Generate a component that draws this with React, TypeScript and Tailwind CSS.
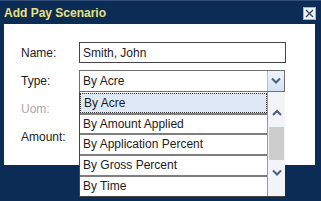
import React from "react";

const items = ["By Acre", "By Amount Applied", "By Application Percent", "By Gross Percent", "By Time"];
const rowH = ["", "h-[20px]", "h-[21px]", "h-[21px]", "h-[21px]"];

function Chevron({ up = false }: { up?: boolean }) {
  return (
    <svg width="10" height="7" viewBox="0 0 10 7" className="block">
      <path
        d={up ? "M1 6 L5 2 L9 6" : "M1 1.5 L5 5.5 L9 1.5"}
        fill="none"
        stroke="#4f5e78"
        strokeWidth="2"
      />
    </svg>
  );
}

export default function App() {
  return (
    <div
      className="w-[321px] h-[201px] bg-[#0b2c55] flex flex-col border-t border-[#34507a] overflow-hidden"
      style={{ fontFamily: '"Liberation Sans", Arial, sans-serif' }}
    >
      <div className="h-[23px] flex items-center justify-between pl-[4px] pr-[5px]">
        <span className="text-[12px] font-bold text-[#e9e27c] leading-none">Add Pay Scenario</span>
        <div className="w-[13px] h-[13px] bg-[#eef3f8] border border-[#9fb2c8] flex items-center justify-center mt-[2px]">
          <svg width="9" height="9" viewBox="0 0 9 9">
            <path d="M1 1 L8 8 M8 1 L1 8" stroke="#3b4a63" strokeWidth="1.4" />
          </svg>
        </div>
      </div>
      <div className="mx-[4px] mr-[6px] h-[141px] bg-white pt-[18px] pl-[17px] flex flex-col gap-[7px] text-[12px] text-[#1c1c1c]">
        <div className="flex items-center h-[21px]">
          <span className="w-[58px]">Name:</span>
          <div className="w-[207px] h-[21px] border border-[#444] flex items-center pl-[3px]">Smith, John</div>
        </div>
        <div className="flex items-center h-[21px]">
          <span className="w-[58px]">Type:</span>
          <div className="relative w-[206px] h-[22px]">
            <div className="w-full h-full border border-[#6f6f6f] flex items-center">
              <span className="flex-1 pl-[3px]">By Acre</span>
              <div className="w-[17px] h-full bg-gradient-to-b from-[#eef4fb] to-[#d3e2f4] border-l border-[#a9bfda] flex items-center justify-center">
                <Chevron />
              </div>
            </div>
            <div className="absolute left-0 top-[22px] w-[206px] h-[105px] bg-white border-l border-b border-[#444] flex z-10">
              <div className="flex-1 flex flex-col border-r border-[#9a9a9a] pt-[1px]">
                {items.map((it, i) => (
                  <div
                    key={it}
                    className={
                      i === 0
                        ? "h-[20px] bg-[#dfe8f6] border border-dotted border-[#333] flex items-center pl-[3px]"
                        : `${rowH[i]} border-t-2 border-[#7e7e7e] flex items-center pl-[3px]`
                    }
                  >
                    {it}
                  </div>
                ))}
              </div>
              <div className="w-[17px] bg-[#f2f4f7] flex flex-col items-center">
                <div className="h-[14px]" />
                <div className="h-[14px] flex items-center justify-center">
                  <Chevron up />
                </div>
                <div className="h-[7px]" />
                <div className="w-[15px] h-[33px] bg-[#cdcdcd]" />
                <div className="h-[5px]" />
                <div className="h-[15px] flex items-center justify-center">
                  <Chevron />
                </div>
              </div>
            </div>
          </div>
        </div>
        <div className="flex items-center h-[21px]">
          <span className="w-[58px] text-[#a9a9a9]">Uom:</span>
        </div>
        <div className="flex items-center h-[21px]">
          <span className="w-[58px]">Amount:</span>
        </div>
      </div>
    </div>
  );
}
